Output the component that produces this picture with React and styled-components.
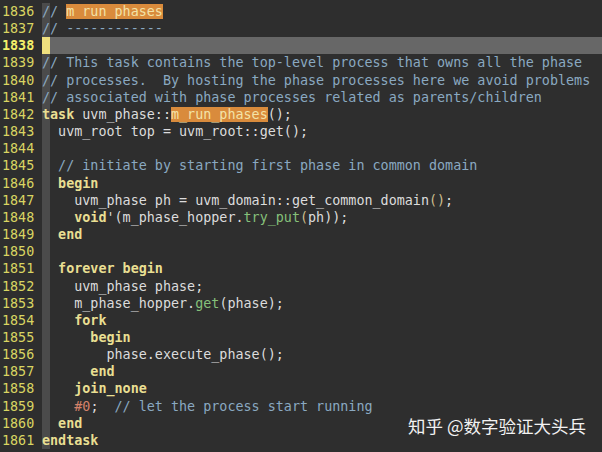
import React from 'react';
import styled, { createGlobalStyle } from 'styled-components';

const GlobalStyle = createGlobalStyle`
  html, body {
    margin: 0;
    padding: 0;
    background: #2d2d2d;
  }
`;

// token kinds: t = text, c = comment, k = keyword, f = function, n = number, p = paren, s = search hit
const lines = [
  [['c', '// '], ['s', 'm run phases']],
  [['c', '// ------------']],
  [],
  [['c', '// This task contains the top-level process that owns all the phase']],
  [['c', '// processes.  By hosting the phase processes here we avoid problems']],
  [['c', '// associated with phase processes related as parents/children']],
  [['k', 'task'], ['t', ' uvm_phase::'], ['s', 'm_run_phases'], ['t', '();']],
  [['t', '  uvm_root top = uvm_root::get();']],
  [],
  [['c', '  // initiate by starting first phase in common domain']],
  [['k', '  begin']],
  [['t', '    uvm_phase ph = uvm_domain::get_common_domain'], ['p', '()'], ['t', ';']],
  [['k', '    void'], ['t', "'(m_phase_hopper."], ['f', 'try_put'], ['p', '('], ['t', 'ph));']],
  [['k', '  end']],
  [],
  [['k', '  forever begin']],
  [['t', '    uvm_phase phase;']],
  [['t', '    m_phase_hopper.'], ['f', 'get'], ['t', '(phase);']],
  [['k', '    fork']],
  [['k', '      begin']],
  [['t', '        phase.execute_phase();']],
  [['k', '      end']],
  [['k', '    join_none']],
  [['t', '    '], ['n', '#0'], ['t', ';  '], ['c', '// let the process start running']],
  [['k', '  end']],
  [['k', 'endtask']],
];

const FIRST = 1836;
const CURRENT = 1838;

const App = () => {
  return (
    <>
      <GlobalStyle />
      <Editor>
        {lines.map((segs, i) => {
          const num = FIRST + i;
          const active = num === CURRENT;
          return (
            <Row key={num}>
              <LineNo $active={active}>{num}</LineNo>
              <Code $active={active}>
                {segs.map(([kind, text], j) => (
                  <Tok key={j} $kind={kind}>{text}</Tok>
                ))}
              </Code>
            </Row>
          );
        })}
        <Watermark>知乎 @数字验证大头兵</Watermark>
      </Editor>
    </>
  );
};

export default App;

const tokenColors = {
  t: '#dcdcdc',
  c: '#8aa9c1',
  k: '#e9df92',
  f: '#86c07a',
  n: '#d5826a',
  p: '#cdbd8c',
  s: '#f3e3a8',
};

const Editor = styled.div`
  position: relative;
  width: 602px;
  height: 452px;
  overflow: hidden;
  box-sizing: border-box;
  padding-top: 3px;
  background: #2e2e2e;
  font-family: 'DejaVu Sans Mono', monospace;
  font-size: 13.4px;
  line-height: 17.16px;
`;

const Row = styled.div`
  display: flex;
  height: 17.16px;
  padding-left: 2px;
`;

const LineNo = styled.div`
  width: 40px;
  flex: none;
  color: ${(p) => (p.$active ? '#f4f06a' : '#d9d562')};
  font-weight: ${(p) => (p.$active ? 'bold' : 'normal')};
`;

const Code = styled.div`
  flex: 1;
  white-space: pre;
  background: ${(p) =>
    p.$active
      ? 'linear-gradient(to right, #efe07e 8px, #676767 8px)'
      : 'linear-gradient(to right, #4b4b4b 8px, transparent 8px)'};
`;

const Tok = styled.span`
  color: ${(p) => tokenColors[p.$kind]};
  font-weight: ${(p) => (p.$kind === 'k' ? 'bold' : 'normal')};
  background: ${(p) => (p.$kind === 's' ? '#d98b3c' : 'transparent')};
`;

const Watermark = styled.div`
  position: absolute;
  right: 16px;
  bottom: 14px;
  color: #f2f2f2;
  font-family: 'Noto Sans CJK SC', sans-serif;
  font-size: 17.5px;
  line-height: 24px;
`;
